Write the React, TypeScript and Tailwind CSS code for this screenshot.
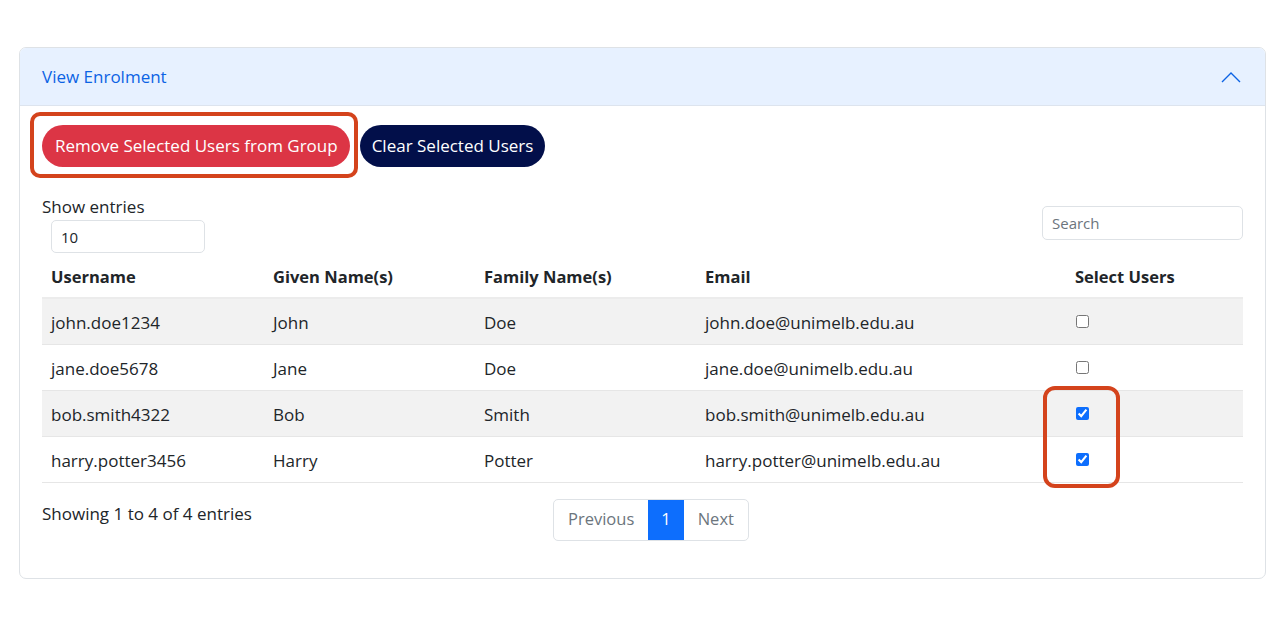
import React, { useState } from "react"

type User = {
  username: string
  given: string
  family: string
  email: string
}

const users: User[] = [
  { username: "john.doe1234", given: "John", family: "Doe", email: "john.doe@unimelb.edu.au" },
  { username: "jane.doe5678", given: "Jane", family: "Doe", email: "jane.doe@unimelb.edu.au" },
  { username: "bob.smith4322", given: "Bob", family: "Smith", email: "bob.smith@unimelb.edu.au" },
  { username: "harry.potter3456", given: "Harry", family: "Potter", email: "harry.potter@unimelb.edu.au" },
]

const ChevronUp = () => (
  <svg width="20" height="12" viewBox="0 0 20 12" fill="none">
    <path d="M1 11L10 2l9 9" stroke="#0c63e4" strokeWidth="1.4" />
  </svg>
)

export default function App() {
  const [selected, setSelected] = useState<string[]>(["bob.smith4322", "harry.potter3456"])

  const toggle = (name: string) => {
    setSelected((prev) => (prev.includes(name) ? prev.filter((n) => n !== name) : [...prev, name]))
  }

  return (
    <div className="min-h-screen bg-white px-[19px] pt-[47px] text-[17px] text-[#212529] [font-family:'Open_Sans',sans-serif]">
      <div className="relative overflow-hidden rounded-[7px] border border-[#dee2e6]">
        {/* accordion header */}
        <div className="flex h-[58px] items-center justify-between border-b border-[#dde4ee] bg-[#e7f1ff] pl-[22px] pr-[24px]">
          <span className="text-[#0c63e4]">View Enrolment</span>
          <ChevronUp />
        </div>

        <div className="px-[22px] pt-[19px] pb-[37px]">
          <div className="flex gap-[10px]">
            <button className="h-[42px] rounded-full bg-[#dc3545] pl-[13px] pr-[12px] text-white">
              Remove Selected Users from Group
            </button>
            <button className="h-[42px] rounded-full bg-[#020f4a] px-[12px] text-white">Clear Selected Users</button>
          </div>

          <div className="mt-[29px] flex justify-between">
            <div>
              <div className="leading-[22px]">Show entries</div>
              <input
                defaultValue="10"
                className="mt-[2px] ml-[9px] h-[33px] w-[154px] rounded-[5px] border border-[#dee2e6] px-[9px] text-[15px] outline-none"
              />
            </div>
            <input
              placeholder="Search"
              className="mt-[10px] h-[34px] w-[201px] rounded-[5px] border border-[#dee2e6] px-[9px] text-[15px] outline-none placeholder:text-[#6c757d]"
            />
          </div>

          <table className="w-full table-fixed border-collapse text-left">
            <colgroup>
              <col className="w-[222px]" />
              <col className="w-[211px]" />
              <col className="w-[221px]" />
              <col className="w-[370px]" />
              <col />
            </colgroup>
            <thead>
              <tr className="h-[45px] border-b-2 border-[#ececec] text-[16.5px]">
                <th className="px-[9px] pt-[4px] font-bold">Username</th>
                <th className="px-[9px] pt-[4px] font-bold">Given Name(s)</th>
                <th className="px-[9px] pt-[4px] font-bold">Family Name(s)</th>
                <th className="px-[9px] pt-[4px] font-bold">Email</th>
                <th className="px-[9px] pt-[4px] font-bold">Select Users</th>
              </tr>
            </thead>
            <tbody>
              {users.map((u, i) => (
                <tr key={u.username} className={`h-[46px] border-b border-[#e6e6e6] ${i % 2 === 0 ? "bg-[#f2f2f2]" : "bg-white"}`}>
                  <td className="px-[9px] pt-[3px]">{u.username}</td>
                  <td className="px-[9px] pt-[3px]">{u.given}</td>
                  <td className="px-[9px] pt-[3px]">{u.family}</td>
                  <td className="px-[9px] pt-[3px]">{u.email}</td>
                  <td className="px-[10px]">
                    <input
                      type="checkbox"
                      checked={selected.includes(u.username)}
                      onChange={() => toggle(u.username)}
                      className="block h-[13px] w-[13px] accent-[#0d6efd]"
                    />
                  </td>
                </tr>
              ))}
            </tbody>
          </table>

          <div className="mt-[20px] flex items-start">
            <div className="w-[511px] leading-[22px]">Showing 1 to 4 of 4 entries</div>
            <div className="mt-[-4px] flex h-[42px] overflow-hidden rounded-[5px] border border-[#dee2e6] text-[16.5px]">
              <span className="flex items-center px-[14px] text-[#6c757d]">Previous</span>
              <span className="flex items-center bg-[#0d6efd] px-[13px] text-white">1</span>
              <span className="flex items-center px-[14px] text-[#6c757d]">Next</span>
            </div>
          </div>
        </div>
      </div>

      {/* highlight rings */}
      <div className="pointer-events-none absolute top-[112px] left-[30px] h-[66px] w-[328px] rounded-[10px] border-4 border-[#d4431c]" />
      <div className="pointer-events-none absolute top-[386px] left-[1043px] h-[102px] w-[77px] rounded-[12px] border-4 border-[#d4431c]" />
    </div>
  )
}
